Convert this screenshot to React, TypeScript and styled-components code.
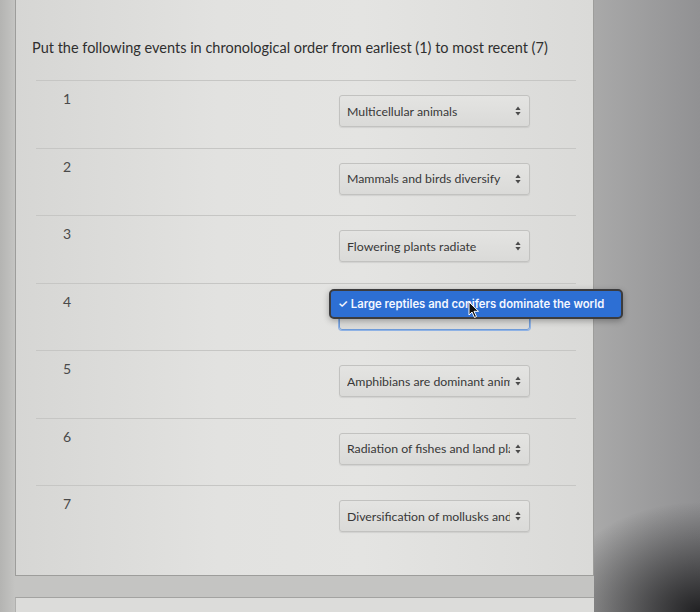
import React from "react"
import styled, { createGlobalStyle } from "styled-components"

// ■■■■■■■■■■■■■■■■■■■■■■■■■■■■■■■■■■■■■■■■■■■■■■■■■■■■■■■■■■■■■■■■■■■■■■■■■■■■■

type Answer = {
	position: number
	label: string
	open?: boolean
}

const answers: Answer[] = [
	{ position: 1, label: "Multicellular animals" },
	{ position: 2, label: "Mammals and birds diversify" },
	{ position: 3, label: "Flowering plants radiate" },
	{ position: 4, label: "Large reptiles and conifers dominate the world", open: true },
	{ position: 5, label: "Amphibians are dominant animals" },
	{ position: 6, label: "Radiation of fishes and land plants" },
	{ position: 7, label: "Diversification of mollusks and trilobites" },
]

// ■■■■■■■■■■■■■■■■■■■■■■■■■■■■■■■■■■■■■■■■■■■■■■■■■■■■■■■■■■■■■■■■■■■■■■■■■■■■■

export default function App() {
	return (
		<>
			<GlobalStyle />
			<Screen>
				<MainColumn>
					<QuestionPanel>
						<Prompt>Put the following events in chronological order from earliest (1) to most recent (7)</Prompt>
						<AnswerList>
							{answers.map((answer) => (
								<AnswerRow key={answer.position}>
									<PositionNumber>{answer.position}</PositionNumber>
									<SelectBox $focused={answer.open}>
										{!answer.open && <SelectLabel>{answer.label}</SelectLabel>}
										<SelectArrows />
										{answer.open && (
											<OptionMenu>
												<OptionText>✓ {answer.label}</OptionText>
												<Pointer />
											</OptionMenu>
										)}
									</SelectBox>
								</AnswerRow>
							))}
						</AnswerList>
					</QuestionPanel>
					<NextPanel />
				</MainColumn>
				<SideStrip />
			</Screen>
		</>
	)
}

function SelectArrows() {
	return (
		<ArrowIcon width="6" height="10" viewBox="0 0 6 10">
			<path d="M3 0.5 L5.6 4 L0.4 4 Z" fill="#4a4a4a" />
			<path d="M3 9.5 L5.6 6 L0.4 6 Z" fill="#4a4a4a" />
		</ArrowIcon>
	)
}

function Pointer() {
	return (
		<PointerIcon width="12" height="18" viewBox="0 0 12 18">
			<path d="M1 1 L1 14 L4 11 L6.5 16.5 L8.5 15.5 L6 10.3 L10.5 10.3 Z" fill="#111" stroke="#fff" strokeWidth="1" />
		</PointerIcon>
	)
}

// 〓〓〓〓〓〓〓〓〓〓〓〓〓〓〓〓〓〓〓〓〓〓〓〓〓〓〓〓〓〓	STYLED_COMPONENTS

const GlobalStyle = createGlobalStyle`
	body {
		margin: 0;
		font-family: "Lato", "Open Sans", sans-serif;
		background: #b8b8b6;
	}
`

const Screen = styled.div`
	display: flex;
	width: 700px;
	height: 612px;
	overflow: hidden;
	background: linear-gradient(to right, #b4b4b2 0px, #c4c4c2 15px);
`

const MainColumn = styled.div`
	width: 594px;
	padding-left: 15px;
	box-sizing: border-box;
	display: flex;
	flex-direction: column;
	flex-shrink: 0;
`

const QuestionPanel = styled.section`
	height: 576px;
	box-sizing: border-box;
	padding: 39px 16px 0 16px;
	border: 1px solid #9d9d9b;
	border-top: none;
	background: linear-gradient(to right, #d6d6d4 0%, #e2e2e0 35%, #e4e4e2 60%, #dadad8 100%);
`

const Prompt = styled.p`
	margin: 0;
	font-size: 14.5px;
	line-height: 18px;
	color: #2f2f2f;
	white-space: nowrap;
`

const AnswerList = styled.ol`
	list-style: none;
	margin: 23px 0 0 4px;
	padding: 0;
	width: 540px;
`

const AnswerRow = styled.li`
	display: grid;
	grid-template-columns: 303px 191px;
	height: 67.5px;
	box-sizing: border-box;
	border-top: 1px solid #c6c6c4;
`

const PositionNumber = styled.span`
	padding: 9px 0 0 27px;
	font-size: 14px;
	line-height: 18px;
	color: #4a4a4a;
`

const SelectBox = styled.div<{ $focused?: boolean }>`
	position: relative;
	margin-top: 14px;
	height: 32px;
	box-sizing: border-box;
	display: flex;
	align-items: center;
	padding: 0 8px 0 7px;
	border: 1px solid ${(p) => (p.$focused ? "#6f9bd8" : "#c2c2c0")};
	border-radius: 3px;
	background: linear-gradient(to bottom, #e4e4e2, #dadad8);
	box-shadow: ${(p) => (p.$focused ? "0 0 0 1px #8fb2e4" : "0 1px 1px rgba(0, 0, 0, 0.08)")};
`

const SelectLabel = styled.span`
	flex: 1;
	overflow: hidden;
	white-space: nowrap;
	margin-right: 5px;
	font-size: 12.3px;
	color: #383838;
`

const ArrowIcon = styled.svg`
	margin-left: auto;
	flex-shrink: 0;
`

const OptionMenu = styled.div`
	position: absolute;
	left: -11px;
	top: -10px;
	width: 294px;
	height: 30px;
	box-sizing: border-box;
	display: flex;
	align-items: center;
	padding-left: 7px;
	border: 2px solid #3c3c3e;
	border-radius: 5px;
	background: #2d6fd4;
	box-shadow: 0 2px 6px rgba(0, 0, 0, 0.3);
`

const OptionText = styled.span`
	font-family: "Inter", "Noto Sans", sans-serif;
	font-weight: 600;
	font-size: 11.3px;
	color: #f4f7ff;
	white-space: nowrap;
`

const PointerIcon = styled.svg`
	position: absolute;
	left: 137px;
	top: 10px;
`

const NextPanel = styled.div`
	margin-top: 21px;
	flex: 1;
	border-top: 1px solid #a3a3a1;
	border-left: 1px solid #b0b0ae;
	background: #dcdcda;
`

const SideStrip = styled.div`
	flex: 1;
	background: radial-gradient(ellipse 150px 110px at 100% 100%, rgba(20, 20, 22, 0.9) 0%, rgba(40, 40, 44, 0) 100%),
		linear-gradient(to right, #a9a9a9, #919193);
`
